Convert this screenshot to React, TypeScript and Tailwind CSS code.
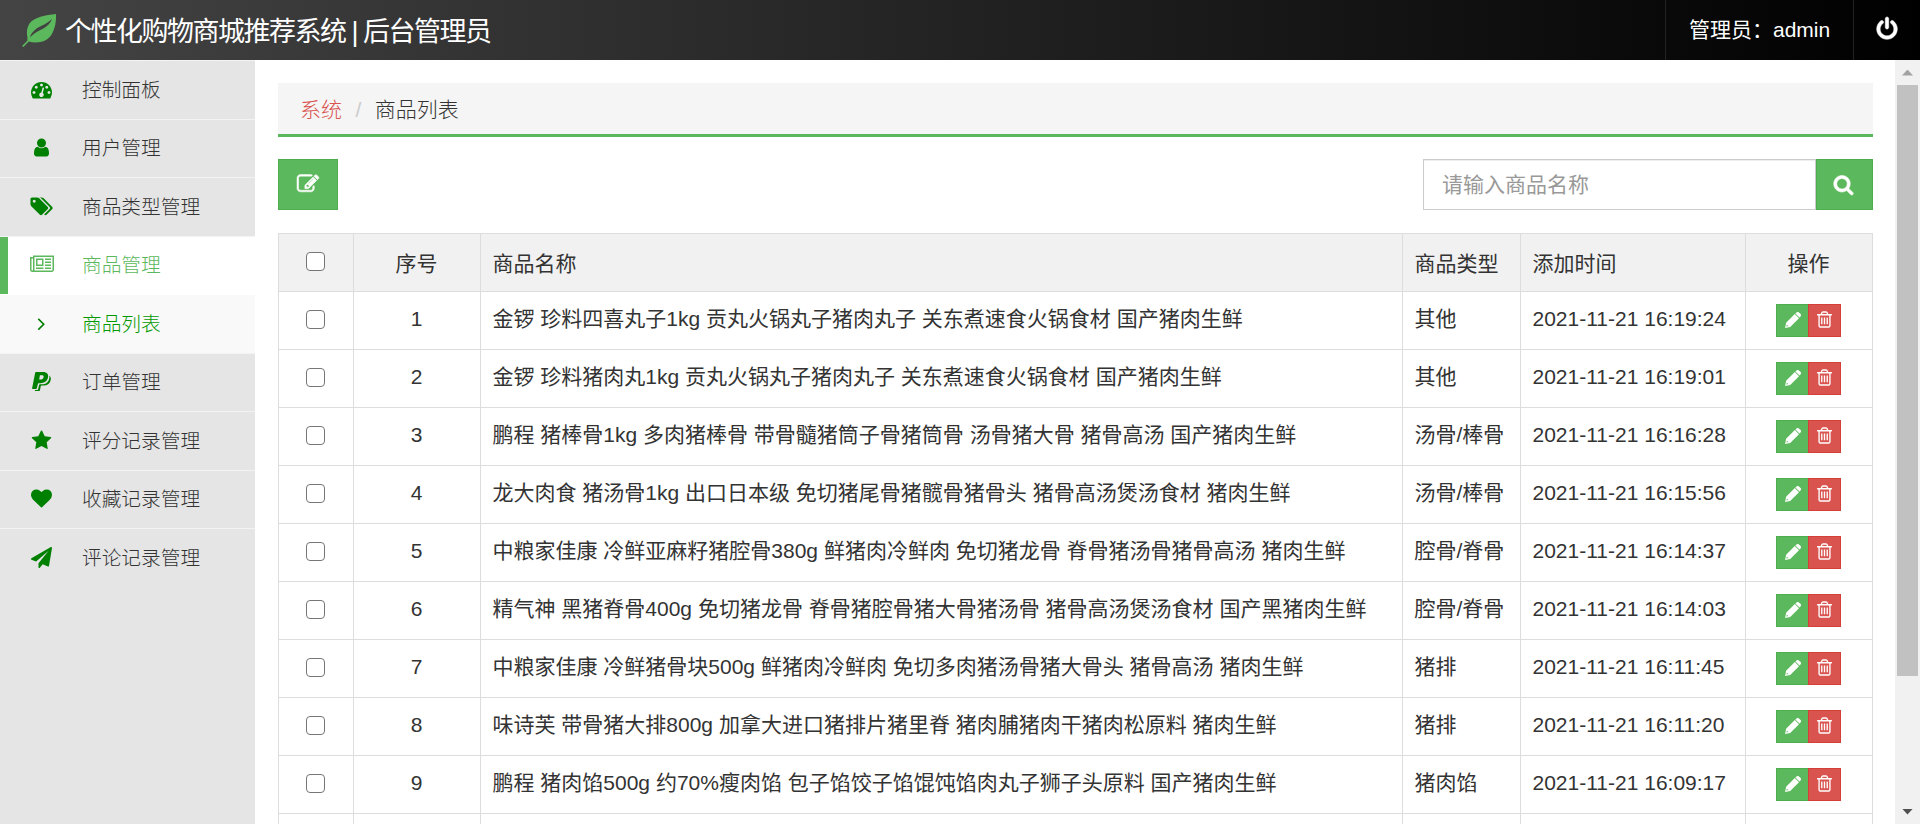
import React from "react";

type IconProps = { d: string; className?: string; viewBox?: string };

const Icon = ({ d, className = "", viewBox = "0 0 1792 1792" }: IconProps) => (
  <svg viewBox={viewBox} className={`overflow-visible ${className}`} fill="currentColor" aria-hidden="true">
    <path d={d} />
  </svg>
);

const ICONS = {
  dashboard:
    "M384 1152q0-53-37.500-90.500t-90.500-37.500-90.500 37.500-37.500 90.500 37.500 90.500 90.500 37.500 90.500-37.500 37.500-90.500zm192-448q0-53-37.500-90.500t-90.500-37.500-90.500 37.500-37.500 90.500 37.500 90.500 90.500 37.500 90.500-37.500 37.500-90.500zm428 481l101-382q6-26-7.500-48.500t-38.500-29.500-48 6.500-30 39.500l-101 382q-60 5-107 43.500t-63 98.500q-20 77 20 146t117 89 146-20 89-117q16-60-6-117t-72-91zm660-33q0-53-37.500-90.500t-90.500-37.500-90.500 37.500-37.500 90.500 37.500 90.500 90.500 37.500 90.500-37.500 37.500-90.500zm-640-640q0-53-37.500-90.500t-90.500-37.500-90.500 37.500-37.500 90.500 37.500 90.500 90.500 37.500 90.500-37.500 37.500-90.500zm448 192q0-53-37.500-90.500t-90.500-37.500-90.500 37.500-37.500 90.500 37.500 90.500 90.500 37.500 90.500-37.500 37.500-90.500zm320 448q0 261-141 483-19 29-54 29h-1402q-35 0-54-29-141-221-141-483 0-182 71-348t191-286 286-191 348-71 348 71 286 191 191 286 71 348z",
  user: "M1536 1399q0 109-62.500 187t-150.500 78h-854q-88 0-150.500-78t-62.500-187q0-85 8.500-160.500t31.500-152 58.500-131 94-89 134.500-34.500q131 128 313 128t313-128q76 0 134.500 34.500t94 89 58.500 131 31.500 152 8.500 160.500zm-256-887q0 159-112.500 271.500t-271.500 112.500-271.500-112.500-112.500-271.500 112.500-271.500 271.500-112.500 271.500 112.500 112.500 271.500z",
  tags: "M384 448q0-53-37.500-90.500t-90.500-37.500-90.500 37.500-37.500 90.500 37.500 90.500 90.500 37.500 90.500-37.500 37.500-90.500zm1067 576q0 53-37 90l-491 492q-39 37-91 37-53 0-90-37l-715-716q-38-37-64.500-101t-26.500-117v-416q0-52 38-90t90-38h416q53 0 117 26.500t102 64.500l715 714q37 39 37 91zm384 0q0 53-37 90l-491 492q-39 37-91 37-36 0-59-14t-53-45l470-470q37-37 37-90 0-52-37-91l-715-714q-38-38-102-64.500t-117-26.500h224q53 0 117 26.500t102 64.500l715 714q37 39 37 91z",
  news: "M1024 512h-384v384h384v-384zm128 640v128h-640v-128h640zm0-768v640h-640v-640h640zm640 768v128h-512v-128h512zm0-256v128h-512v-128h512zm0-256v128h-512v-128h512zm0-256v128h-512v-128h512zm-1536 960v-960h-128v960q0 26 19 45t45 19 45-19 19-45zm1664 0v-1088h-1536v1088q0 33-11 64h1483q26 0 45-19t19-45zm128-1216v1216q0 80-56 136t-136 56h-1664q-80 0-136-56t-56-136v-1088h256v-128h1792z",
  star: "M1728 647q0 22-26 48l-363 354 86 500q1 7 1 20 0 21-10.500 35.500t-30.500 14.500q-19 0-40-12l-449-236-449 236q-22 12-40 12-21 0-31.500-14.500t-10.500-35.500q0-6 2-20l86-500-364-354q-25-27-25-48 0-37 56-46l502-73 225-455q19-41 49-41t49 41l225 455 502 73q56 9 56 46z",
  heart:
    "M896 1664q-26 0-44-18l-624-602q-10-8-27.500-26t-55.500-65.500-68-97.500-53.500-121-23.500-138q0-220 127-344t351-124q62 0 126.500 21.500t120 58 95.500 68.500 76 68q36-36 76-68t95.500-68.500 120-58 126.500-21.500q224 0 351 124t127 344q0 221-229 450l-623 600q-18 18-44 18z",
  plane:
    "M1764 11q33 24 27 64l-256 1536q-5 29-32 45-14 8-31 8-11 0-24-5l-453-185-242 295q-18 23-49 23-13 0-22-4-19-7-30.500-23.500t-11.500-36.500v-349l864-1059-1069 925-395-162q-37-14-40-55-2-40 32-59l1664-960q15-9 32-9 20 0 36 11z",
  angle:
    "M1171 960q0 13-10 23l-466 466q-10 10-23 10t-23-10l-50-50q-10-10-10-23t10-23l393-393-393-393q-10-10-10-23t10-23l50-50q10-10 23-10t23 10l466 466q10 10 10 23z",
  edit: "M888 1184l116-116-152-152-116 116v56h96v96h56zm440-720q-16-16-33 1l-350 350q-17 17-1 33t33-1l350-350q17-17 1-33zm80 594v190q0 119-84.500 203.500t-203.500 84.500h-832q-119 0-203.500-84.500t-84.500-203.500v-832q0-119 84.500-203.500t203.500-84.500h832q63 0 117 25 15 7 18 23 3 17-9 29l-49 49q-14 14-32 8-23-6-45-6h-832q-66 0-113 47t-47 113v832q0 66 47 113t113 47h832q66 0 113-47t47-113v-126q0-13 9-22l64-64q15-15 35-7t20 29zm-96-738l288 288-672 672h-288v-288zm444 132l-92 92-288-288 92-92q28-28 68-28t68 28l152 152q28 28 28 68t-28 68z",
  power:
    "M1664 896q0 156-61 298t-164 245-245 164-298 61-298-61-245-164-164-245-61-298q0-182 80.500-343t226.500-270q43-32 95.500-25t83.500 50q32 42 24.500 94.500t-49.500 84.500q-98 74-151.500 181t-53.500 228q0 104 40.500 198.500t109.500 163.500 163.500 109.500 198.500 40.500 198.500-40.500 163.500-109.500 109.500-163.500 40.500-198.500q0-121-53.500-228t-151.500-181q-42-32-49.500-84.500t24.500-94.500q31-43 84-50t95 25q146 109 226.500 270t80.500 343zm-640-768v640q0 52-38 90t-90 38-90-38-38-90v-640q0-52 38-90t90-38 90 38 38 90z",
  search:
    "M1216 832q0-185-131.500-316.500t-316.500-131.500-316.500 131.500-131.500 316.500 131.500 316.500 316.500 131.500 316.500-131.500 131.500-316.500zm512 832q0 52-38 90t-90 38q-54 0-90-38l-343-342q-179 124-399 124-143 0-273.500-55.500t-225-150-150-225-55.500-273.500 55.500-273.500 150-225 225-150 273.500-55.500 273.500 55.500 225 150 150 225 55.500 273.500q0 220-124 399l343 343q37 37 37 90z",
  trash:
    "M704 736v576q0 14-9 23t-23 9h-64q-14 0-23-9t-9-23v-576q0-14 9-23t23-9h64q14 0 23 9t9 23zm256 0v576q0 14-9 23t-23 9h-64q-14 0-23-9t-9-23v-576q0-14 9-23t23-9h64q14 0 23 9t9 23zm256 0v576q0 14-9 23t-23 9h-64q-14 0-23-9t-9-23v-576q0-14 9-23t23-9h64q14 0 23 9t9 23zm128 724v-948h-896v948q0 22 7 40.500t14.500 27 10.500 8.500h832q3 0 10.500-8.500t14.500-27 7-40.500zm-672-1076h448l-48-117q-7-9-17-11h-317q-10 2-17 11zm928 32v64q0 14-9 23t-23 9h-96v948q0 83-47 143.500t-113 60.500h-832q-66 0-113-58.500t-47-141.500v-952h-96q-14 0-23-9t-9-23v-64q0-14 9-23t23-9h309l70-167q15-37 54-63t79-26h320q40 0 79 26t54 63l70 167h309q14 0 23 9t9 23z",
};

const Leaf = () => (
  <svg viewBox="0 0 34 33" className="h-[33px] w-[34px] text-[#5cb85c]" fill="currentColor" aria-hidden="true">
    <path
      fillRule="evenodd"
      d="M34 0C24 1 12 3 7.500 9.500C4.500 14 4.500 19 5.500 23.500L5.300 26.800L0 32L1.400 33L6.800 27.600C12 29.300 20 29 25.500 25C31 21 34.500 11 34 0ZM8 23.500C9.200 18.300 14 14.300 19 12C23.500 10 27 8 30 4.800C28.500 9.500 25 12.900 20.500 14.900C15.500 17.200 11 19.500 8 23.500Z"
    />
  </svg>
);

const Pencil = () => (
  <svg viewBox="0 0 16 16" className="-mt-px size-4" fill="currentColor" aria-hidden="true">
    <path
      fillRule="evenodd"
      d="M9.800 2L14 6.200L5.200 14.900L.1 16L1.100 10.800ZM1.900 12.700L1.500 14.500L3.300 14.100Z"
    />
    <path d="M10.400 1.500L11.500.5C12.300-.2 13.200-.2 13.900.4L15.600 2.100C16.200 2.800 16.200 3.700 15.500 4.400L14.500 5.500Z" />
  </svg>
);

const Paypal = ({ className = "" }: { className?: string }) => (
  <svg viewBox="0 0 18 18" className={className} fill="currentColor" aria-hidden="true">
    <path
      fillRule="evenodd"
      d="M3.800 0H10.500C14 0 15.800 2 15.200 5C14.500 8.800 11.500 10.600 8 10.600H6.600C5.900 10.600 5.600 11 5.500 11.500L4.600 15.400C4.500 15.900 4.200 16 3.800 16H.6C.1 16 0 15.700.1 15.300L3 .7C3.100.2 3.400 0 3.800 0ZM7.500 3.100L6.800 7.100H7.900C9.600 7.100 10.700 6.500 11 4.900C11.200 3.600 10.600 3.100 9.300 3.100Z"
    />
    <path d="M16.300 3.200C17.800 4.300 18.100 6 17.600 8C16.800 11.200 14.300 12.700 11.200 12.700H9.400C8.700 12.700 8.400 13.100 8.300 13.600L7.600 17.100C7.500 17.700 7.200 18 6.700 18H3.200C2.800 18 2.600 17.600 2.800 17.100H4.900C5.400 17.100 5.700 16.800 5.800 16.300L6.700 12.300C6.800 11.800 7 11.600 7.600 11.600H9.200C13.300 11.600 15.800 9.400 16.400 5.600C16.500 4.700 16.500 4 16.300 3.200Z" />
  </svg>
);

const DARK_ITEM = "border-[#f3f3f3] bg-[#e5e5e5] text-[#333]";

const menu: { label: string; height: string; tone: string; icon: React.ReactNode }[] = [
  { label: "控制面板", height: "h-[59px]", tone: DARK_ITEM, icon: <Icon d={ICONS.dashboard} className="size-[21px]" /> },
  { label: "用户管理", height: "h-[58px]", tone: DARK_ITEM, icon: <Icon d={ICONS.user} className="size-[21px]" /> },
  { label: "商品类型管理", height: "h-[59px]", tone: DARK_ITEM, icon: <Icon d={ICONS.tags} viewBox="0 0 1840 1792" className="h-[21px] w-[22px]" /> },
  { label: "商品管理", height: "h-[58px]", tone: "active", icon: <Icon d={ICONS.news} viewBox="0 0 2048 1792" className="h-[21px] w-6" /> },
  { label: "商品列表", height: "h-[59px]", tone: "sub", icon: <Icon d={ICONS.angle} className="size-[21px]" /> },
  { label: "订单管理", height: "h-[58px]", tone: DARK_ITEM, icon: <Paypal className="size-[19px]" /> },
  { label: "评分记录管理", height: "h-[59px]", tone: DARK_ITEM, icon: <Icon d={ICONS.star} className="size-[21px]" /> },
  { label: "收藏记录管理", height: "h-[58px]", tone: DARK_ITEM, icon: <Icon d={ICONS.heart} className="size-[21px]" /> },
  { label: "评论记录管理", height: "h-[59px]", tone: "border-transparent bg-[#e5e5e5] text-[#333]", icon: <Icon d={ICONS.plane} className="size-[21px]" /> },
];

const products = [
  ["金锣 珍料四喜丸子1kg 贡丸火锅丸子猪肉丸子 关东煮速食火锅食材 国产猪肉生鲜", "其他", "2021-11-21 16:19:24"],
  ["金锣 珍料猪肉丸1kg 贡丸火锅丸子猪肉丸子 关东煮速食火锅食材 国产猪肉生鲜", "其他", "2021-11-21 16:19:01"],
  ["鹏程 猪棒骨1kg 多肉猪棒骨 带骨髓猪筒子骨猪筒骨 汤骨猪大骨 猪骨高汤 国产猪肉生鲜", "汤骨/棒骨", "2021-11-21 16:16:28"],
  ["龙大肉食 猪汤骨1kg 出口日本级 免切猪尾骨猪髋骨猪骨头 猪骨高汤煲汤食材 猪肉生鲜", "汤骨/棒骨", "2021-11-21 16:15:56"],
  ["中粮家佳康 冷鲜亚麻籽猪腔骨380g 鲜猪肉冷鲜肉 免切猪龙骨 脊骨猪汤骨猪骨高汤 猪肉生鲜", "腔骨/脊骨", "2021-11-21 16:14:37"],
  ["精气神 黑猪脊骨400g 免切猪龙骨 脊骨猪腔骨猪大骨猪汤骨 猪骨高汤煲汤食材 国产黑猪肉生鲜", "腔骨/脊骨", "2021-11-21 16:14:03"],
  ["中粮家佳康 冷鲜猪骨块500g 鲜猪肉冷鲜肉 免切多肉猪汤骨猪大骨头 猪骨高汤 猪肉生鲜", "猪排", "2021-11-21 16:11:45"],
  ["味诗芙 带骨猪大排800g 加拿大进口猪排片猪里脊 猪肉脯猪肉干猪肉松原料 猪肉生鲜", "猪排", "2021-11-21 16:11:20"],
  ["鹏程 猪肉馅500g 约70%瘦肉馅 包子馅饺子馅馄饨馅肉丸子狮子头原料 国产猪肉生鲜", "猪肉馅", "2021-11-21 16:09:17"],
];

const COLS = "grid grid-cols-[75px_127px_922px_118px_225px_127px]";
const CELL = "border-r border-b border-[#ddd]";

const Checkbox = () => (
  <span className="block size-[19px] rounded-[4px] border border-[#767676] bg-white" />
);

function Header() {
  return (
    <header className="flex h-[60px] shrink-0 justify-between bg-linear-to-r/srgb from-[#444] to-black text-white">
      <div className="flex pt-[14px] pl-[22px]">
        <Leaf />
        <h1 className="-mt-[3px] ml-[9px] text-[27px] leading-[42px] font-normal tracking-[-1.5px] whitespace-nowrap">
          个性化购物商城推荐系统 | 后台管理员
        </h1>
      </div>
      <div className="flex">
        <div className="w-[188px] border-l border-[#222] pl-[23px] leading-[59px] whitespace-nowrap">管理员：admin</div>
        <div className="flex w-[67px] justify-center border-l border-[#222] pt-[17px]">
          <Icon d={ICONS.power} className="size-[24px] stroke-current [stroke-width:40]" />
        </div>
      </div>
    </header>
  );
}

function Sidebar() {
  return (
    <nav className="w-[255px] shrink-0 bg-[#e5e5e5] text-[19.7px] font-light">
      <ul className="border-t border-[#f3f3f3]">
        {menu.map((m) => {
          const active = m.tone === "active";
          const sub = m.tone === "sub";
          const tone = active
            ? "border-white bg-white text-[#5cb85c]"
            : sub
              ? "border-[#f3f3f3] bg-[#f9f9f9] text-[#009900]"
              : m.tone;
          return (
            <li key={m.label} className={`flex items-center border-b bg-clip-padding ${m.height} ${tone}`}>
              <span className={active ? "h-full w-2 bg-[#5cb85c]" : "h-full w-2"} />
              <span className={`flex w-[67px] justify-center pb-[2px] ${active ? "text-[#5cb85c]" : "text-[#008000]"}`}>{m.icon}</span>
              <span className="ml-[7px] pt-px whitespace-nowrap">{m.label}</span>
            </li>
          );
        })}
      </ul>
    </nav>
  );
}

function Table() {
  return (
    <div className="mt-[23px] w-[1595px] border-t border-l border-[#ddd]">
      <div className={`${COLS} h-[58px] bg-[#f1f1f1] leading-[55px]`}>
        <div className={`${CELL} flex justify-center pt-[18px] pr-px`}><Checkbox /></div>
        <div className={`${CELL} pt-[2px] pr-px text-center`}>序号</div>
        <div className={`${CELL} pt-[2px] pl-[11.5px]`}>商品名称</div>
        <div className={`${CELL} pt-[2px] pl-[11.5px]`}>商品类型</div>
        <div className={`${CELL} pt-[2px] pl-[11.5px]`}>添加时间</div>
        <div className={`${CELL} pt-[2px] pr-px text-center`}>操作</div>
      </div>
      {products.map(([name, type, time], i) => (
        <div key={name} className={`${COLS} h-[58px] leading-[54px] whitespace-nowrap`}>
          <div className={`${CELL} flex justify-center pt-[18px] pr-px`}><Checkbox /></div>
          <div className={`${CELL} pr-px text-center`}>{i + 1}</div>
          <div className={`${CELL} pl-[11.5px]`}>{name}</div>
          <div className={`${CELL} pl-[11.5px]`}>{type}</div>
          <div className={`${CELL} pl-[11.5px]`}>{time}</div>
          <div className={`${CELL} flex pt-3 pl-[30px] text-white`}>
            <button className="flex h-[33px] w-8 items-center justify-center border border-r-0 border-[#4cae4c] bg-[#5cb85c] pl-px">
              <Pencil />
            </button>
            <button className="flex size-[33px] items-center justify-center border border-[#d43f3a] bg-[#d9534f]">
              <Icon d={ICONS.trash} className="-mt-[2px] size-[19px]" />
            </button>
          </div>
        </div>
      ))}
      <div className={`${COLS} h-[58px]`}>
        {[0, 1, 2, 3, 4, 5].map((c) => (
          <div key={c} className={CELL} />
        ))}
      </div>
    </div>
  );
}

function Scrollbar() {
  return (
    <div className="flex w-[25px] shrink-0 flex-col items-center bg-[#f1f1f1]">
      <div className="flex h-[25px] items-center">
        <span className="block h-[6px] w-[11px] bg-[#a3a3a3] [clip-path:polygon(50%_0,100%_100%,0_100%)]" />
      </div>
      <div className="h-[591px] w-[21px] bg-[#c1c1c1]" />
      <div className="mt-auto flex h-[25px] items-center">
        <span className="block h-[6px] w-[11px] bg-[#505050] [clip-path:polygon(0_0,100%_0,50%_100%)]" />
      </div>
    </div>
  );
}

export default function App() {
  return (
    <div className="flex h-[824px] w-[1920px] flex-col overflow-hidden bg-white font-['Liberation_Sans','Noto_Sans_CJK_SC',sans-serif] text-[21px] text-[#333]">
      <Header />
      <div className="flex min-h-0 flex-1">
        <Sidebar />
        <main className="min-w-0 flex-1 overflow-hidden pt-[23px] pl-[23px]">
          <div className="flex h-[54px] w-[1595px] border-b-[3px] border-[#5cb85c] bg-[#f5f5f5] pl-[22px] leading-[54px] font-light">
            <span className="text-[#d9534f]">系统</span>
            <span className="px-[13.5px] text-[#ccc]">/</span>
            <span>商品列表</span>
          </div>
          <div className="mt-[22px] flex h-[51px] w-[1595px] justify-between">
            <button className="flex w-[60px] items-center justify-center border border-[#4cae4c] bg-[#5cb85c] pr-px text-white">
              <Icon d={ICONS.edit} className="-mt-[2px] size-[22px] stroke-current [stroke-width:40]" />
            </button>
            <div className="flex">
              <div className="w-[393px] border border-[#ccc] pl-[18px] leading-[49px] text-[#999] shadow-[inset_0_1px_1px_rgba(0,0,0,0.075)]">
                请输入商品名称
              </div>
              <button className="flex w-[57px] items-center justify-center border border-[#4cae4c] bg-[#5cb85c] pr-[2px] text-white">
                <Icon d={ICONS.search} className="size-[21px] stroke-current [stroke-width:50]" />
              </button>
            </div>
          </div>
          <Table />
        </main>
        <Scrollbar />
      </div>
    </div>
  );
}
